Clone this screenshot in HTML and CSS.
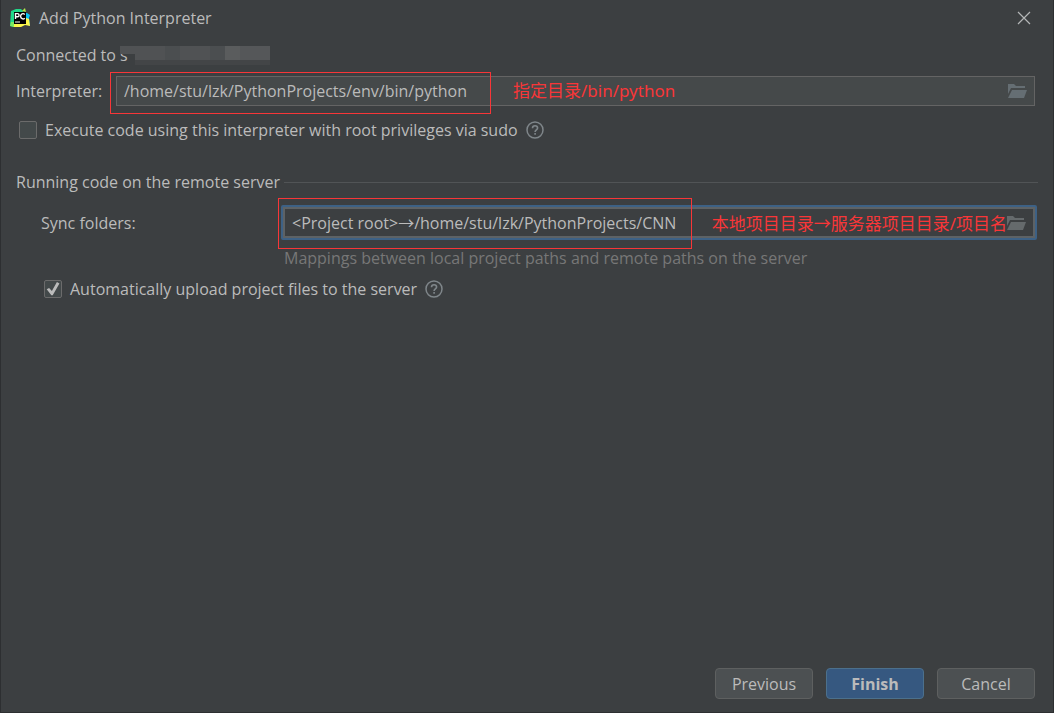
FILE: index.html
```html
<!DOCTYPE html>
<html lang="en">
<head>
<meta charset="utf-8">
<title>Add Python Interpreter</title>
<link rel="stylesheet" href="styles.css">
</head>
<body>
<main class="dialog">
  <header class="titlebar">
    <svg class="logo" viewBox="0 0 20 20" aria-hidden="true">
      <path d="M1 3 6 1l5 0 2 2-2 6-6 7-1 3-4-1Z" fill="#21d789"/>
      <path d="m14 5 3 0 3 2-1 3 1 8-6-3Z" fill="#07c3f2"/>
      <path d="m3 19 1-4 12-5 3 1 1 7-5-1-4 2Z" fill="#fcf84a"/>
      <path d="m12 3 3-3 1 4Z" fill="#b4e84a"/>
      <path d="M1 14h3v5l-4-1Z" fill="#7bea62"/>
      <path d="M4 4h12v12H4Z" fill="#000"/>
      <path d="M5 14h5" stroke="#fff"/>
      <path d="M5.500 11V5.600h2a1.500 1.500 0 0 1 0 3.200h-2M14.800 6.400c-1.700-1.500-4.200-.5-4.200 1.900s2.500 3.400 4.200 1.900" fill="none" stroke="#fff" stroke-width="1.400"/>
    </svg>
    <h1 class="title">Add Python Interpreter</h1>
    <button class="close" type="button" aria-label="Close">
      <svg viewBox="0 0 14 14" aria-hidden="true"><path d="m1 1 12 12M13 1 1 13" stroke="#b4b6b7" stroke-width="1.200"/></svg>
    </button>
  </header>

  <form class="form">
    <p class="connection">Connected to s<span class="mosaic" aria-hidden="true"><i></i><i></i><i></i><i></i><i></i><i></i><i></i><i></i><i></i><i></i></span></p>

    <div class="row interpreter">
      <label for="interpreter">Interpreter:</label>
      <div class="field">
        <input id="interpreter" type="text" value="/home/stu/lzk/PythonProjects/env/bin/python">
        <button class="browse" type="button" aria-label="Browse interpreter">
          <svg viewBox="0 0 20 16" aria-hidden="true"><path d="M1 1h6l2 2h9v2H4L1 11ZM5 7h15l-3 8H1Z" fill="#656e73"/></svg>
        </button>
        <span class="mark mark-interpreter"></span>
        <span class="note note-interpreter" lang="zh">指定目录/bin/python</span>
      </div>
    </div>

    <div class="check sudo">
      <input id="sudo" type="checkbox">
      <label for="sudo">Execute code using this interpreter with root privileges via sudo</label>
      <button class="help" type="button" aria-label="Help on root privileges">
        <svg viewBox="0 0 18 18" aria-hidden="true"><circle cx="9" cy="9" r="8" fill="none" stroke="#7f868a" stroke-width="1.500"/><path d="M6.500 7.200C6.500 3.800 11.600 4 11.600 7c0 1.800-2.500 2-2.500 4M9.100 12v1.800" fill="none" stroke="#7f868a" stroke-width="1.600"/></svg>
      </button>
    </div>

    <section class="remote">
      <h2 class="heading">Running code on the remote server</h2>
      <div class="row sync">
        <label for="folders">Sync folders:</label>
        <div class="field focused">
          <input id="folders" type="text" value="&lt;Project root&gt;→/home/stu/lzk/PythonProjects/CNN">
          <button class="browse" type="button" aria-label="Browse folders">
            <svg viewBox="0 0 20 16" aria-hidden="true"><path d="M1 1h6l2 2h9v2H4L1 11ZM5 7h15l-3 8H1Z" fill="#656a6c"/></svg>
          </button>
          <span class="mark mark-folders"></span>
          <span class="note note-folders" lang="zh">本地项目目录→服务器项目目录/项目名</span>
        </div>
        <p class="hint">Mappings between local project paths and remote paths on the server</p>
      </div>
      <div class="check upload">
        <input id="upload" type="checkbox" checked>
        <label for="upload">Automatically upload project files to the server</label>
        <button class="help" type="button" aria-label="Help on automatic upload">
          <svg viewBox="0 0 18 18" aria-hidden="true"><circle cx="9" cy="9" r="8" fill="none" stroke="#7f868a" stroke-width="1.500"/><path d="M6.500 7.200C6.500 3.800 11.600 4 11.600 7c0 1.800-2.500 2-2.500 4M9.100 12v1.800" fill="none" stroke="#7f868a" stroke-width="1.600"/></svg>
        </button>
      </div>
    </section>
  </form>

  <footer class="actions">
    <button class="btn" type="button">Previous</button>
    <button class="btn primary" type="button">Finish</button>
    <button class="btn" type="button">Cancel</button>
  </footer>
</main>
</body>
</html>
```
FILE: styles.css
```css
* {
  box-sizing: border-box;
}

body {
  margin: 0;
  background: #3c3f41;
  color: #bbbbbb;
  font: 16px/24px "Open Sans", "Noto Sans CJK SC", sans-serif;
}

h1, h2, p {
  margin: 0;
  font-size: inherit;
  font-weight: 400;
}

button, input {
  margin: 0;
  color: inherit;
  font: inherit;
}

svg {
  display: block;
}

.dialog {
  display: flex;
  flex-direction: column;
  min-height: 100vh;
  border: 1px solid #2d2f31;
  border-top: 0;
}

.titlebar {
  display: flex;
  align-items: center;
  height: 36px;
  padding: 0 22px 0 9px;
}

.logo {
  width: 20px;
  height: 20px;
}

.title {
  flex: 1;
  margin-left: 9px;
}

.close, .browse, .help {
  padding: 0;
  border: 0;
  background: none;
}

.close svg {
  width: 14px;
  height: 14px;
}

.form {
  flex: 1;
  padding: 7px 15px 0;
}

.connection {
  display: flex;
}

.mosaic {
  display: grid;
  grid-template-columns: repeat(10, 15px);
  height: 14px;
  margin: 3px 0 0 -8px;
}

.mosaic i {
  background: #505254;
  box-shadow: 0 5px #434547;
}

.mosaic i:first-child {
  height: 8px;
  box-shadow: none;
}

.mosaic i:nth-child(4),
.mosaic i:nth-child(7) {
  background: #4b4e50;
}

.mosaic i:nth-child(8) {
  background: #5a5c5d;
}

.mosaic i:nth-child(n+9) {
  background: #555759;
}

.row {
  display: grid;
  align-items: center;
}

.interpreter {
  grid-template-columns: 100px 1fr;
  margin-top: 9px;
  padding-right: 3px;
}

.field {
  position: relative;
  display: flex;
  align-items: center;
  height: 30px;
  padding: 0 7px;
  border: 1px solid #646464;
  background: #45494a;
}

.field input {
  flex: 1;
  min-width: 0;
  padding: 0;
  border: 0;
  outline: 0;
  background: none;
}

.browse svg {
  width: 20px;
  height: 16px;
}

.focused {
  height: 35px;
  padding: 0 9px;
  border: 2px solid #3d6185;
  border-radius: 2px;
  background: #3c3f41;
  box-shadow: inset 0 0 0 2px #5d6265;
}

.mark {
  position: absolute;
  border: 1px solid #f83638;
  pointer-events: none;
}

.mark-interpreter {
  inset: -5px auto -9px -7px;
  width: 381px;
}

.mark-folders {
  inset: -9px auto -11px -5px;
  width: 414px;
}

.note {
  position: absolute;
  top: 2px;
  color: #f83638;
  font: 17px/24px "Noto Sans", "Noto Sans CJK SC", sans-serif;
  white-space: nowrap;
  pointer-events: none;
}

.note-interpreter {
  left: 396px;
}

.note-folders {
  right: 28px;
  top: 5px;
}

.check {
  display: flex;
  align-items: center;
}

.check input {
  appearance: none;
  width: 18px;
  height: 18px;
  border: 1px solid #6b6b6b;
  border-radius: 2px;
  background: #43494a;
}

.check input:checked {
  display: grid;
  place-items: center;
}

.check input:checked::before {
  content: "";
  width: 14px;
  height: 14px;
  background: #bbbbbb;
  clip-path: polygon(5% 52%, 22% 42%, 42% 65%, 78% 0, 96% 10%, 48% 94%, 38% 94%);
}

.check label {
  margin-left: 8px;
}

.help {
  margin-left: 8px;
}

.help svg {
  width: 18px;
  height: 18px;
}

.sudo {
  margin-top: 12px;
  padding-left: 3px;
}

.remote {
  margin-top: 28px;
}

.heading {
  display: flex;
  align-items: center;
  gap: 4px;
}

.heading::after {
  content: "";
  flex: 1;
  height: 1px;
  background: #515456;
}

.sync {
  grid-template-columns: 240px 1fr;
  margin-top: 11px;
  padding: 0 1px 0 25px;
}

.hint {
  grid-column: 2;
  margin-top: 6px;
  padding-left: 3px;
  color: #777777;
}

.upload {
  margin-top: 7px;
  padding-left: 28px;
}

.actions {
  display: flex;
  justify-content: flex-end;
  gap: 13px;
  padding: 0 18px 13px;
}

.btn {
  width: 98px;
  height: 31px;
  padding: 0;
  border: 1px solid #5e6060;
  border-radius: 4px;
  background: #4c5052;
}

.primary {
  border-color: #4c708c;
  background: #365880;
  font-weight: 700;
}
```
